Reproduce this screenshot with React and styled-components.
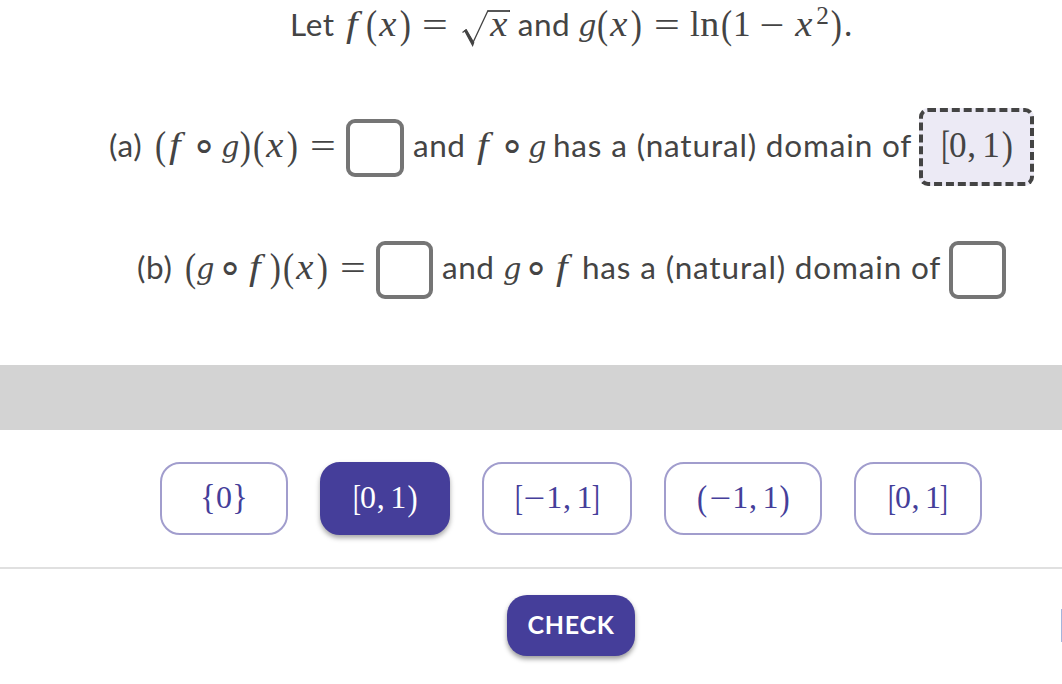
import React from "react";
import styled, { createGlobalStyle, css } from "styled-components";

const GlobalStyle = createGlobalStyle`
  * {
    box-sizing: border-box;
  }

  body {
    margin: 0;
    background: #fff;
    color: #444;
    font-family: Lato, sans-serif;
    overflow: hidden;
  }
`;

const Page = styled.div`
  width: 1062px;
  height: 684px;
  display: flex;
  flex-direction: column;
  overflow: hidden;
`;

const Question = styled.section`
  height: 365px;
  padding-left: 81px;
  display: flex;
  flex-direction: column;
`;

const Phrase = styled.div`
  display: flex;
  align-items: baseline;
  height: 40px;
  line-height: 40px;
  font-size: 35.2px;
  white-space: nowrap;
`;

const Line = styled.div`
  display: flex;
  align-items: center;
  justify-content: center;
  height: ${({ $height }) => $height}px;
  margin-top: ${({ $gap = 0 }) => $gap}px;

  & > ${Phrase} {
    margin-bottom: 4px;
  }
`;

const Word = styled.span`
  width: ${({ $width }) => $width}px;
  padding-left: ${({ $indent = 0 }) => $indent}px;
  font-size: 31.5px;
  letter-spacing: ${({ $track = 0.6 }) => $track}px;
`;

const Cell = styled.span`
  flex: none;
  width: ${({ $width }) => $width}em;
  margin: 0 ${({ $space }) => $space}em;
  display: flex;
  justify-content: center;
  align-items: baseline;
  font-family: "Liberation Serif", serif;
`;

const Glyph = styled.span`
  display: inline-block;
  line-height: 1;
  ${({ $g }) => css`
    font-style: ${$g.italic ? "italic" : "normal"};
    font-family: ${$g.family || "inherit"};
    font-size: ${$g.size || 1}em;
    transform: translate(${$g.dx || 0}em, ${$g.dy || 0}em)
      scale(${$g.sx || 1}, ${$g.sy || 1});
  `}
`;

const Root = styled.span`
  display: flex;
  align-items: baseline;
`;

// the hook hangs below the box, whose bottom edge sits on the baseline
const Surd = styled.svg`
  flex: none;
  width: 51px;
  height: 28px;
  margin-right: -21px;
  overflow: visible;
`;

const Blank = styled.div`
  flex: none;
  width: ${({ $width }) => $width}px;
  height: 58px;
  margin-top: 2px;
  border: 4px solid #757575;
  border-radius: 9px;
`;

const Filled = styled.div`
  flex: none;
  width: 115px;
  height: 78px;
  padding-top: 2px;
  display: flex;
  align-items: center;
  justify-content: center;
  border: 4px dashed #444;
  border-radius: 9px;
  background: #eceaf5;
`;

const Band = styled.div`
  height: 65px;
  background: #d3d3d3;
`;

const Choices = styled.section`
  height: 139px;
  padding: 32px 0 0 80px;
  display: flex;
  justify-content: center;
  gap: 32px;
  border-bottom: 2px solid #e0e0e0;
`;

const Choice = styled.button`
  width: ${({ $width }) => $width}px;
  height: 73px;
  padding: 5px 0 0;
  display: flex;
  align-items: center;
  justify-content: center;
  border: 2px solid #a19dcd;
  border-radius: 20px;
  background: #fff;
  color: #453e9a;

  ${Phrase} {
    font-size: 32px;
  }

  ${({ $selected }) =>
    $selected &&
    css`
      border-color: #453e9a;
      background: #453e9a;
      color: #fff;
      box-shadow: 0 3px 5px rgba(0, 0, 0, 0.35);
    `}
`;

const Footer = styled.footer`
  flex: 1;
  padding: 26px 0 0 80px;
  display: grid;
  grid-template-columns: 1fr auto 1fr;
  align-items: start;
`;

const CheckButton = styled.button`
  grid-column: 2;
  width: 128px;
  height: 61px;
  padding: 0 0 3px;
  border: 0;
  border-radius: 20px;
  background: #453e9a;
  color: #fff;
  font: 700 25px Lato, sans-serif;
  letter-spacing: 0.7px;
  box-shadow: 0 3px 5px rgba(0, 0, 0, 0.4);
`;

const EdgeTab = styled.div`
  justify-self: end;
  width: 1px;
  height: 33px;
  margin-top: 14px;
  background: #a3b5dc;
`;

// widths are in em, like the advance widths of a math font
const glyphs = {
  f: { w: 0.598, italic: true, sx: 1.18, dx: -0.06 },
  g: { w: 0.477, italic: true, family: '"DejaVu Serif"', size: 0.87, sx: 0.94, dx: 0.01 },
  x: { w: 0.572, italic: true, sx: 1.1 },
  "(": { w: 0.389, sx: 0.95, sy: 1.14, dx: 0.02 },
  ")": { w: 0.389, sx: 0.95, sy: 1.14, dx: 0.01 },
  "[": { w: 0.278, sx: 0.75, sy: 1.14, dx: 0.05 },
  "]": { w: 0.278, sx: 0.75, sy: 1.14, dx: -0.05 },
  "{": { w: 0.5, sy: 1.1 },
  "}": { w: 0.5, sy: 1.1 },
  "=": { w: 0.778, space: 0.278, sx: 1.3, dy: 0.04 },
  "∘": { w: 0.5, space: 0.222, sx: 1.2, sy: 1.2, dy: 0.06 },
  "−": { w: 0.778, space: 0.222, sx: 1.25, dy: 0.04 },
  "~": { text: "−", w: 0.778, sx: 1.2, dy: 0.04 },
  ",": { w: 0.445, dx: -0.08 },
  "²": { text: "2", w: 0.449, size: 0.72, dx: 0.04, dy: -0.47 },
  l: { w: 0.278 },
  n: { w: 0.556, sx: 1.08 },
  ".": { w: 0.278 },
};

function Math({ children }) {
  return [...children].map((char, i) => {
    const g = glyphs[char] || { w: 0.5 };
    return (
      <Cell key={i} $width={g.w} $space={g.space || 0}>
        <Glyph $g={g}>{g.text || char}</Glyph>
      </Cell>
    );
  });
}

function SquareRoot({ children }) {
  return (
    <Root>
      <Surd viewBox="0 0 51 28">
        <path d="M3.5 24.5L7 22L14 34.5L29 2.5" fill="none" stroke="currentColor" strokeWidth="1.3" />
        <path d="M5.8 22.8L7.2 22L14.6 34.6L13.6 37.4Z" fill="currentColor" stroke="currentColor" strokeWidth="1.4" />
        <path d="M28.5 3H51" stroke="currentColor" strokeWidth="1.8" />
      </Surd>
      <Math>{children}</Math>
    </Root>
  );
}

const choices = [
  { label: "{0}", width: 128 },
  { label: "[0,1)", width: 130, selected: true },
  { label: "[~1,1]", width: 150 },
  { label: "(~1,1)", width: 158 },
  { label: "[0,1]", width: 128 },
];

export default function App() {
  return (
    <Page>
      <GlobalStyle />
      <Question>
        <Line $height={52}>
          <Phrase>
            <Word $width={53}>Let</Word>
            <Math>f(x)=</Math>
            <SquareRoot>x</SquareRoot>
            <Word $width={70} $indent={9}>and</Word>
            <Math>g(x)=ln(1−x²).</Math>
          </Phrase>
        </Line>
        <Line $height={78} $gap={56}>
          <Phrase>
            <Word $width={44}>(a)</Word>
            <Math>(f∘g)(x)=</Math>
          </Phrase>
          <Blank $width={58} />
          <Phrase>
            <Word $width={70} $indent={9}>and</Word>
            <Math>f∘g</Math>
            <Word $width={374} $indent={8} $track={0.84}>has a (natural) domain of</Word>
          </Phrase>
          <Filled>
            <Phrase>
              <Math>[0,1)</Math>
            </Phrase>
          </Filled>
        </Line>
        <Line $height={60} $gap={53}>
          <Phrase>
            <Word $width={46}>(b)</Word>
            <Math>(g∘f)(x)=</Math>
          </Phrase>
          <Blank $width={57} />
          <Phrase>
            <Word $width={70} $indent={9}>and</Word>
            <Math>g∘f</Math>
            <Word $width={375} $indent={8} $track={0.84}>has a (natural) domain of</Word>
          </Phrase>
          <Blank $width={57} />
        </Line>
      </Question>
      <Band />
      <Choices>
        {choices.map(({ label, width, selected }) => (
          <Choice key={label} $width={width} $selected={selected}>
            <Phrase>
              <Math>{label}</Math>
            </Phrase>
          </Choice>
        ))}
      </Choices>
      <Footer>
        <CheckButton>CHECK</CheckButton>
        <EdgeTab />
      </Footer>
    </Page>
  );
}
